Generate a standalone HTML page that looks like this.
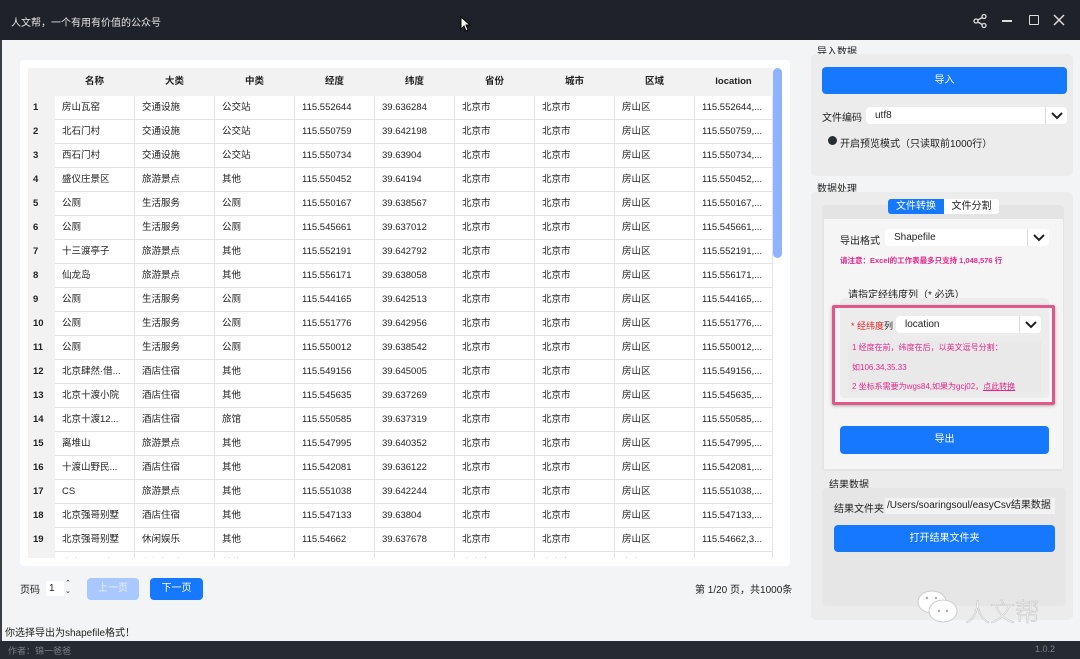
<!DOCTYPE html>
<html><head><meta charset="utf-8"><style>
*{margin:0;padding:0;box-sizing:border-box}
body{width:1080px;height:659px;overflow:hidden;background:#f3f4f5;font-family:"Liberation Sans","Noto Sans CJK SC",sans-serif;font-size:10px;color:#222;position:relative}
.a{position:absolute}
.top{left:0;top:0;width:1080px;height:40px;background:#1f2329;color:#e6e6e6;font-size:10px}
.bot{left:0;top:641px;width:1080px;height:18px;background:#262b33;color:#7a7f88;font-size:9px}
.card{left:20px;top:60px;width:770px;height:506px;background:#fff;border-radius:4px;overflow:hidden}
table{position:absolute;left:8px;top:8px;border-collapse:collapse;table-layout:fixed;width:744px}
td,th{height:24px;border:1px solid #e3e3e3;font-size:9.5px;line-height:12px;text-align:left;padding-left:7px;white-space:nowrap;overflow:hidden;vertical-align:middle}
th{background:#f2f2f2;text-align:center;font-weight:bold;padding:0;border-color:#f2f2f2;height:27px}
td.i{background:#f2f2f2;font-weight:bold;border-color:#f2f2f2;padding-left:4px}
.btn{background:#1677ff;color:#fff;border-radius:4px;text-align:center;font-size:10px}
.box{background:#ececec;border-radius:5px}
.sel{background:#fff;border-radius:4px;font-size:10px;padding-left:9px}
.chev{position:absolute;right:0;top:0;width:22px;height:100%;border-left:1px solid #ddd}
.pink{color:#e5278b;font-size:8px}
</style></head><body>
<div class="a top"><div class="a" style="left:11px;top:14px">人文帮，一个有用有价值的公众号</div>
<svg class="a" style="left:460px;top:16px" width="11" height="16" viewBox="0 0 11 16"><path d="M1 1 L1 13 L4 10 L6 15 L8 14 L6 9 L10 9 Z" fill="#fff" stroke="#000" stroke-width="1"/></svg>
<svg class="a" style="left:972px;top:13px" width="16" height="16" viewBox="0 0 16 16" fill="none" stroke="#ddd" stroke-width="1.3"><circle cx="12" cy="3.5" r="2"/><circle cx="4" cy="8" r="2"/><circle cx="12" cy="12.5" r="2"/><path d="M5.8 7 L10.2 4.5 M5.8 9 L10.2 11.5"/></svg>
<div class="a" style="left:1002px;top:20px;width:10px;height:1.5px;background:#ddd"></div>
<div class="a" style="left:1029px;top:15px;width:10px;height:10px;border:1.5px solid #ddd;border-radius:1px"></div>
<svg class="a" style="left:1053px;top:14px" width="12" height="12" viewBox="0 0 12 12" stroke="#ddd" stroke-width="1.5"><path d="M1 1L11 11M11 1L1 11"/></svg>
</div>
<div class="a" style="left:0;top:40px;width:2px;height:601px;background:#3a3d42"></div>
<div class="a card">
<table>
<colgroup><col style="width:26px"><col style="width:80px"><col style="width:80px"><col style="width:80px"><col style="width:80px"><col style="width:80px"><col style="width:80px"><col style="width:80px"><col style="width:80px"><col style="width:78px"></colgroup>
<tr><th></th><th>名称</th><th>大类</th><th>中类</th><th>经度</th><th>纬度</th><th>省份</th><th>城市</th><th>区域</th><th>location</th></tr>
<tr><td class="i">1</td><td>房山瓦窑</td><td>交通设施</td><td>公交站</td><td>115.552644</td><td>39.636284</td><td>北京市</td><td>北京市</td><td>房山区</td><td>115.552644,...</td></tr>
<tr><td class="i">2</td><td>北石门村</td><td>交通设施</td><td>公交站</td><td>115.550759</td><td>39.642198</td><td>北京市</td><td>北京市</td><td>房山区</td><td>115.550759,...</td></tr>
<tr><td class="i">3</td><td>西石门村</td><td>交通设施</td><td>公交站</td><td>115.550734</td><td>39.63904</td><td>北京市</td><td>北京市</td><td>房山区</td><td>115.550734,...</td></tr>
<tr><td class="i">4</td><td>盛仪庄景区</td><td>旅游景点</td><td>其他</td><td>115.550452</td><td>39.64194</td><td>北京市</td><td>北京市</td><td>房山区</td><td>115.550452,...</td></tr>
<tr><td class="i">5</td><td>公厕</td><td>生活服务</td><td>公厕</td><td>115.550167</td><td>39.638567</td><td>北京市</td><td>北京市</td><td>房山区</td><td>115.550167,...</td></tr>
<tr><td class="i">6</td><td>公厕</td><td>生活服务</td><td>公厕</td><td>115.545661</td><td>39.637012</td><td>北京市</td><td>北京市</td><td>房山区</td><td>115.545661,...</td></tr>
<tr><td class="i">7</td><td>十三渡亭子</td><td>旅游景点</td><td>其他</td><td>115.552191</td><td>39.642792</td><td>北京市</td><td>北京市</td><td>房山区</td><td>115.552191,...</td></tr>
<tr><td class="i">8</td><td>仙龙岛</td><td>旅游景点</td><td>其他</td><td>115.556171</td><td>39.638058</td><td>北京市</td><td>北京市</td><td>房山区</td><td>115.556171,...</td></tr>
<tr><td class="i">9</td><td>公厕</td><td>生活服务</td><td>公厕</td><td>115.544165</td><td>39.642513</td><td>北京市</td><td>北京市</td><td>房山区</td><td>115.544165,...</td></tr>
<tr><td class="i">10</td><td>公厕</td><td>生活服务</td><td>公厕</td><td>115.551776</td><td>39.642956</td><td>北京市</td><td>北京市</td><td>房山区</td><td>115.551776,...</td></tr>
<tr><td class="i">11</td><td>公厕</td><td>生活服务</td><td>公厕</td><td>115.550012</td><td>39.638542</td><td>北京市</td><td>北京市</td><td>房山区</td><td>115.550012,...</td></tr>
<tr><td class="i">12</td><td>北京肆然·借...</td><td>酒店住宿</td><td>其他</td><td>115.549156</td><td>39.645005</td><td>北京市</td><td>北京市</td><td>房山区</td><td>115.549156,...</td></tr>
<tr><td class="i">13</td><td>北京十渡小院</td><td>酒店住宿</td><td>其他</td><td>115.545635</td><td>39.637269</td><td>北京市</td><td>北京市</td><td>房山区</td><td>115.545635,...</td></tr>
<tr><td class="i">14</td><td>北京十渡12...</td><td>酒店住宿</td><td>旅馆</td><td>115.550585</td><td>39.637319</td><td>北京市</td><td>北京市</td><td>房山区</td><td>115.550585,...</td></tr>
<tr><td class="i">15</td><td>离堆山</td><td>旅游景点</td><td>其他</td><td>115.547995</td><td>39.640352</td><td>北京市</td><td>北京市</td><td>房山区</td><td>115.547995,...</td></tr>
<tr><td class="i">16</td><td>十渡山野民...</td><td>酒店住宿</td><td>其他</td><td>115.542081</td><td>39.636122</td><td>北京市</td><td>北京市</td><td>房山区</td><td>115.542081,...</td></tr>
<tr><td class="i">17</td><td>CS</td><td>旅游景点</td><td>其他</td><td>115.551038</td><td>39.642244</td><td>北京市</td><td>北京市</td><td>房山区</td><td>115.551038,...</td></tr>
<tr><td class="i">18</td><td>北京强哥别墅</td><td>酒店住宿</td><td>其他</td><td>115.547133</td><td>39.63804</td><td>北京市</td><td>北京市</td><td>房山区</td><td>115.547133,...</td></tr>
<tr><td class="i">19</td><td>北京强哥别墅</td><td>休闲娱乐</td><td>其他</td><td>115.54662</td><td>39.637678</td><td>北京市</td><td>北京市</td><td>房山区</td><td>115.54662,3...</td></tr>
<tr><td class="i">20</td><td>北京强哥别墅</td><td>休闲娱乐</td><td>其他</td><td>115.54662</td><td>39.637678</td><td>北京市</td><td>北京市</td><td>房山区</td><td>115.54662,...</td></tr>
</table>
<div class="a" style="left:0;top:498px;width:770px;height:8px;background:#fff"></div>
<div class="a" style="left:753px;top:8px;width:9px;height:190px;background:#8fb3ff;border-radius:5px"></div>
</div>
<div class="a" style="left:20px;top:581px">页码</div>
<div class="a" style="left:46px;top:581px;width:18px;height:15px;background:#fff;padding-left:3px;line-height:15px">1</div>
<div class="a" style="left:65px;top:580px;font-size:7px;line-height:8px">⌃<br>⌄</div>
<div class="a btn" style="left:87px;top:578px;width:52px;height:22px;line-height:22px;background:#a9c8ff;color:#e8f0ff">上一页</div>
<div class="a btn" style="left:150px;top:578px;width:53px;height:22px;line-height:22px">下一页</div>
<div class="a" style="left:695px;top:581px">第 1/20 页，共1000条</div>
<div class="a" style="left:5px;top:624px">你选择导出为shapefile格式！</div>
<div class="a bot"><div class="a" style="left:8px;top:3px">作者：锦一爸爸</div><div class="a" style="left:1035px;top:3px">1.0.2</div></div>

<div class="a" style="left:817px;top:43px">导入数据</div>
<div class="a box" style="left:811px;top:54px;width:262px;height:122px"></div>
<div class="a btn" style="left:822px;top:67px;width:245px;height:27px;line-height:27px">导入</div>
<div class="a" style="left:822px;top:109px">文件编码</div>
<div class="a sel" style="left:866px;top:107px;width:201px;height:17px;line-height:17px">utf8<div class="chev"><svg width="22" height="17" viewBox="0 0 22 17"><path d="M6 6 L11 11 L16 6" fill="none" stroke="#222" stroke-width="2"/></svg></div></div>
<div class="a" style="left:828px;top:136px;width:9px;height:9px;border-radius:50%;background:#2a2d33"></div>
<div class="a" style="left:840px;top:135px">开启预览模式（只读取前1000行）</div>

<div class="a" style="left:817px;top:180px">数据处理</div>
<div class="a box" style="left:811px;top:192px;width:262px;height:428px"></div>
<div class="a" style="left:822px;top:205px;width:242px;height:266px;background:#e4e4e4;border-radius:4px"></div>
<div class="a" style="left:824px;top:219px;width:239px;height:250px;background:#f5f5f5"></div>
<div class="a" style="left:888px;top:199px;width:111px;height:15px;background:#fff;border-radius:3px"></div>
<div class="a" style="left:888px;top:199px;width:56px;height:15px;background:#1677ff;color:#fff;text-align:center;line-height:15px;border-radius:3px 0 0 3px">文件转换</div>
<div class="a" style="left:944px;top:199px;width:55px;height:15px;text-align:center;line-height:15px">文件分割</div>
<div class="a" style="left:840px;top:232px">导出格式</div>
<div class="a sel" style="left:885px;top:229px;width:164px;height:17px;line-height:17px">Shapefile<div class="chev"><svg width="22" height="17" viewBox="0 0 22 17"><path d="M6 6 L11 11 L16 6" fill="none" stroke="#222" stroke-width="2"/></svg></div></div>
<div class="a pink" style="left:840px;top:255px;font-weight:bold;font-size:7.5px">请注意：Excel的工作表最多只支持 1,048,576 行</div>
<div class="a" style="left:848px;top:286px">请指定经纬度列（* 必选）</div>
<div class="a" style="left:840px;top:298px;width:209px;height:100px;background:#ececec;border-radius:4px"></div>
<div class="a" style="left:832px;top:305px;width:223px;height:100px;border:3px solid #e0578a;border-radius:2px;box-shadow:0 1px 3px rgba(0,0,0,.3)"></div>
<div class="a" style="left:851px;top:319px;font-size:9px"><span style="color:#e22">* 经纬度</span>列</div>
<div class="a sel" style="left:896px;top:316px;width:145px;height:17px;line-height:17px">location<div class="chev"><svg width="22" height="17" viewBox="0 0 22 17"><path d="M6 6 L11 11 L16 6" fill="none" stroke="#222" stroke-width="2"/></svg></div></div>
<div class="a" style="left:848px;top:341px;width:193px;height:51px;background:#e9e9e9"></div>
<div class="a pink" style="left:852px;top:342px">1 经度在前，纬度在后，以英文逗号分割：</div>
<div class="a pink" style="left:852px;top:362px">如106.34,35.33</div>
<div class="a pink" style="left:852px;top:381px">2 坐标系需要为wgs84,如果为gcj02，<u>点此转换</u></div>
<div class="a btn" style="left:840px;top:426px;width:209px;height:28px;line-height:28px">导出</div>
<div class="a" style="left:829px;top:476px">结果数据</div>
<div class="a" style="left:822px;top:488px;width:244px;height:118px;background:#e6e6e6;border-radius:4px"></div>
<div class="a" style="left:834px;top:500px">结果文件夹</div>
<div class="a" style="left:885px;top:498px;width:170px;height:16px;background:#f2f2f2;line-height:16px;padding-left:2px;white-space:nowrap;overflow:hidden">/Users/soaringsoul/easyCsv结果数据</div>
<div class="a btn" style="left:834px;top:525px;width:221px;height:27px;line-height:27px">打开结果文件夹</div>
<svg class="a" style="left:916px;top:590px" width="46" height="34" viewBox="0 0 46 34"><ellipse cx="16" cy="12" rx="14" ry="11" fill="#fff" stroke="#ccc"/><ellipse cx="27" cy="21" rx="14" ry="11" fill="#fff" stroke="#ccc"/><circle cx="11" cy="8" r="1.2" fill="#aaa"/><circle cx="20" cy="8" r="1.2" fill="#aaa"/><circle cx="23" cy="21" r="1.2" fill="#aaa"/><circle cx="31" cy="21" r="1.2" fill="#aaa"/></svg>
<div class="a" style="left:965px;top:593px;font-size:25px;color:#fff;-webkit-text-stroke:0.6px #c4c4c4;font-family:'Noto Sans CJK SC',sans-serif;font-weight:300">人文帮</div>
</body></html>
